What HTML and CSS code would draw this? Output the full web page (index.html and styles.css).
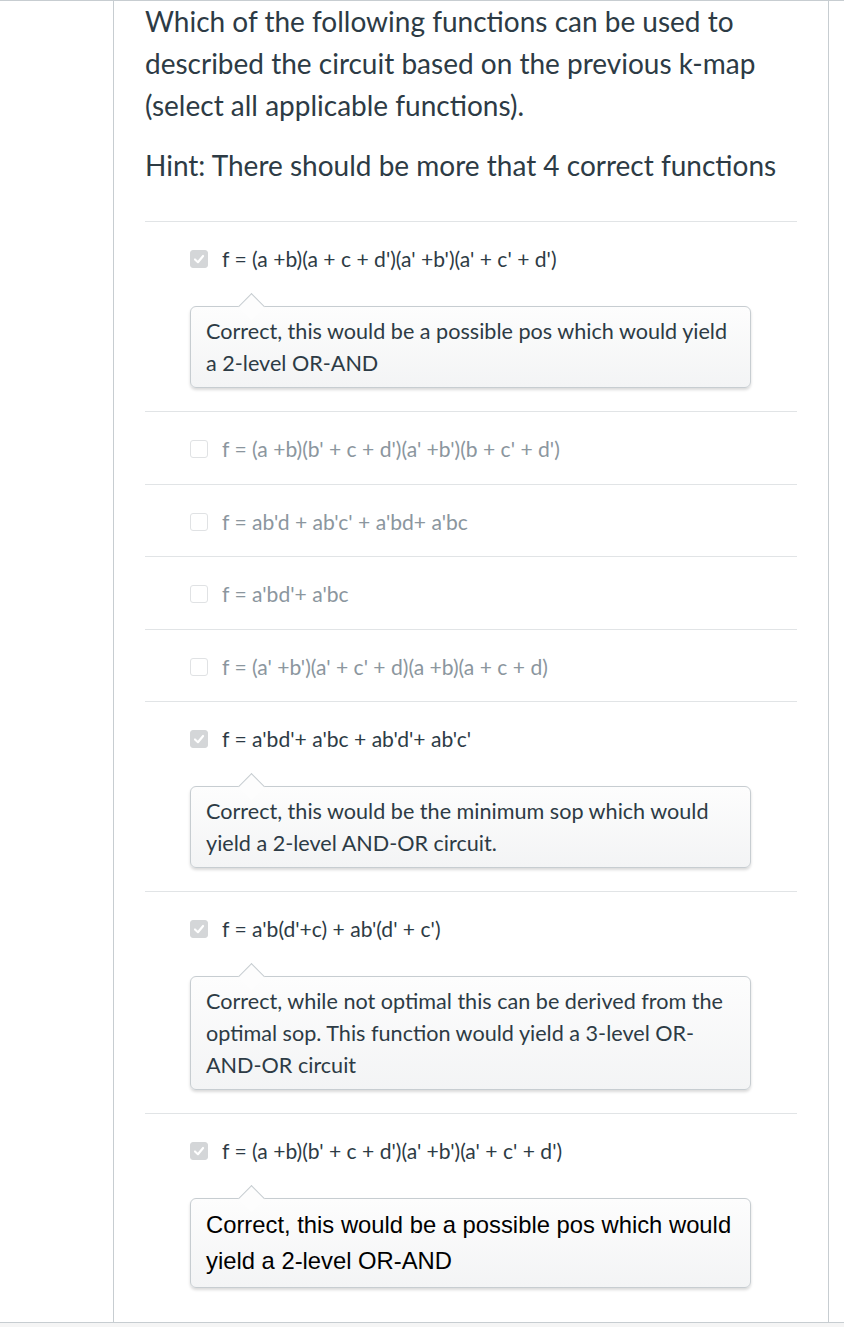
FILE: index.html
```html
<!DOCTYPE html>
<html lang="en">
<head>
    <meta charset="UTF-8">
    <title>Quiz Results</title>
    <link rel="stylesheet" href="styles.css">
</head>
<body>

    <div class="page">
        <div class="main">
            <!-- Question text -->
            <div class="question-text">
                <p>Which of the following functions can be used to described the circuit based on the previous k-map (select all applicable functions).</p>
                <p>Hint: There should be more that 4 correct functions</p>
            </div>

            <!-- Answers -->
            <div class="answers">
                <div class="answer selected">
                    <div class="answer-label">
                        <span class="check"><svg viewBox="0 0 18 18"><path d="M4.5 9.5 L7.8 12.6 L13.6 5.6" /></svg></span>
                        <span>f = (a +b)(a + c + d')(a' +b')(a' + c' + d')</span>
                    </div>
                    <div class="feedback">Correct, this would be a possible pos which would yield a 2-level OR-AND</div>
                </div>

                <div class="answer">
                    <div class="answer-label">
                        <span class="check"></span>
                        <span>f = (a +b)(b' + c + d')(a' +b')(b + c' + d')</span>
                    </div>
                </div>

                <div class="answer">
                    <div class="answer-label">
                        <span class="check"></span>
                        <span>f = ab'd + ab'c' + a'bd+ a'bc</span>
                    </div>
                </div>

                <div class="answer">
                    <div class="answer-label">
                        <span class="check"></span>
                        <span>f = a'bd'+ a'bc</span>
                    </div>
                </div>

                <div class="answer">
                    <div class="answer-label">
                        <span class="check"></span>
                        <span>f = (a' +b')(a' + c' + d)(a +b)(a + c + d)</span>
                    </div>
                </div>

                <div class="answer selected">
                    <div class="answer-label">
                        <span class="check"><svg viewBox="0 0 18 18"><path d="M4.5 9.5 L7.8 12.6 L13.6 5.6" /></svg></span>
                        <span>f = a'bd'+ a'bc + ab'd'+ ab'c'</span>
                    </div>
                    <div class="feedback">Correct, this would be the minimum sop which would yield a 2-level AND-OR circuit.</div>
                </div>

                <div class="answer selected">
                    <div class="answer-label">
                        <span class="check"><svg viewBox="0 0 18 18"><path d="M4.5 9.5 L7.8 12.6 L13.6 5.6" /></svg></span>
                        <span>f = a'b(d'+c) + ab'(d' + c')</span>
                    </div>
                    <div class="feedback">Correct, while not optimal this can be derived from the optimal sop. This function would yield a 3-level OR-AND-OR circuit</div>
                </div>

                <div class="answer selected last">
                    <div class="answer-label">
                        <span class="check"><svg viewBox="0 0 18 18"><path d="M4.5 9.5 L7.8 12.6 L13.6 5.6" /></svg></span>
                        <span>f = (a +b)(b' + c + d')(a' +b')(a' + c' + d')</span>
                    </div>
                    <div class="feedback plain">Correct, this would be a possible pos which would yield a 2-level OR-AND</div>
                </div>
            </div>
        </div>
    </div>
    <div class="footer"></div>

</body>
</html>
```

FILE: styles.css
```css
/* General Styles */
body {
    font-family: Lato, "Open Sans", sans-serif;
    background-color: #ffffff;
    margin: 0;
    padding: 0;
    color: #2d3b45;
}

.page {
    border-top: 1px solid #c7cdd1;
    border-bottom: 1px solid #c7cdd1;
}

.main {
    margin-left: 113px;
    width: 652px;
    border-left: 1px solid #c7cdd1;
    border-right: 1px solid #c7cdd1;
    padding: 0 31px 0 31px;
    margin-top: -1px;
}

.footer {
    height: 10px;
    background-color: #f5f5f5;
}

/* Question */
.question-text p {
    font-size: 28px;
    line-height: 42px;
    margin: 0 0 18px 0;
}

.question-text p:last-child {
    margin-bottom: 35px;
}

/* Answers */
.answer {
    border-top: 1px solid #e1e4e6;
    padding: 25px 0 22.5px 45px;
}

.answer.selected {
    padding-bottom: 23px;
}

.answer.last {
    padding-bottom: 34px;
}

.answer-label {
    display: flex;
    align-items: center;
    font-size: 21.1px;
    line-height: 24px;
    color: #8b969e;
}

.answer.selected .answer-label {
    color: #2d3b45;
}

.check {
    width: 16px;
    height: 16px;
    border: 1px solid #e0e2e4;
    border-radius: 3px;
    background-color: #fff;
    margin-right: 14px;
    display: inline-flex;
    flex-shrink: 0;
}

.selected .check {
    background-color: #d4d6d8;
    border-color: #d4d6d8;
}

.check svg {
    width: 16px;
    height: 16px;
}

.check path {
    fill: none;
    stroke: #fff;
    stroke-width: 2.4;
    stroke-linecap: round;
    stroke-linejoin: round;
}

/* Feedback box */
.feedback {
    position: relative;
    margin: 35px 46px 0 0;
    padding: 8px 15px;
    font-size: 21.6px;
    line-height: 32px;
    border: 1px solid #c7cdd1;
    border-radius: 6px;
    background: linear-gradient(#fdfdfd, #f3f4f5);
    box-shadow: 0 2px 3px rgba(0, 0, 0, 0.15);
}

.feedback::before {
    content: "";
    position: absolute;
    left: 51px;
    top: -10px;
    width: 18px;
    height: 18px;
    background-color: #fdfdfd;
    border-top: 1px solid #c7cdd1;
    border-left: 1px solid #c7cdd1;
    transform: rotate(45deg);
}

.feedback.plain {
    font-family: "Liberation Sans", Arial, sans-serif;
    font-size: 23.8px;
    line-height: 36px;
    padding-right: 8px;
    color: #000;
}
```
